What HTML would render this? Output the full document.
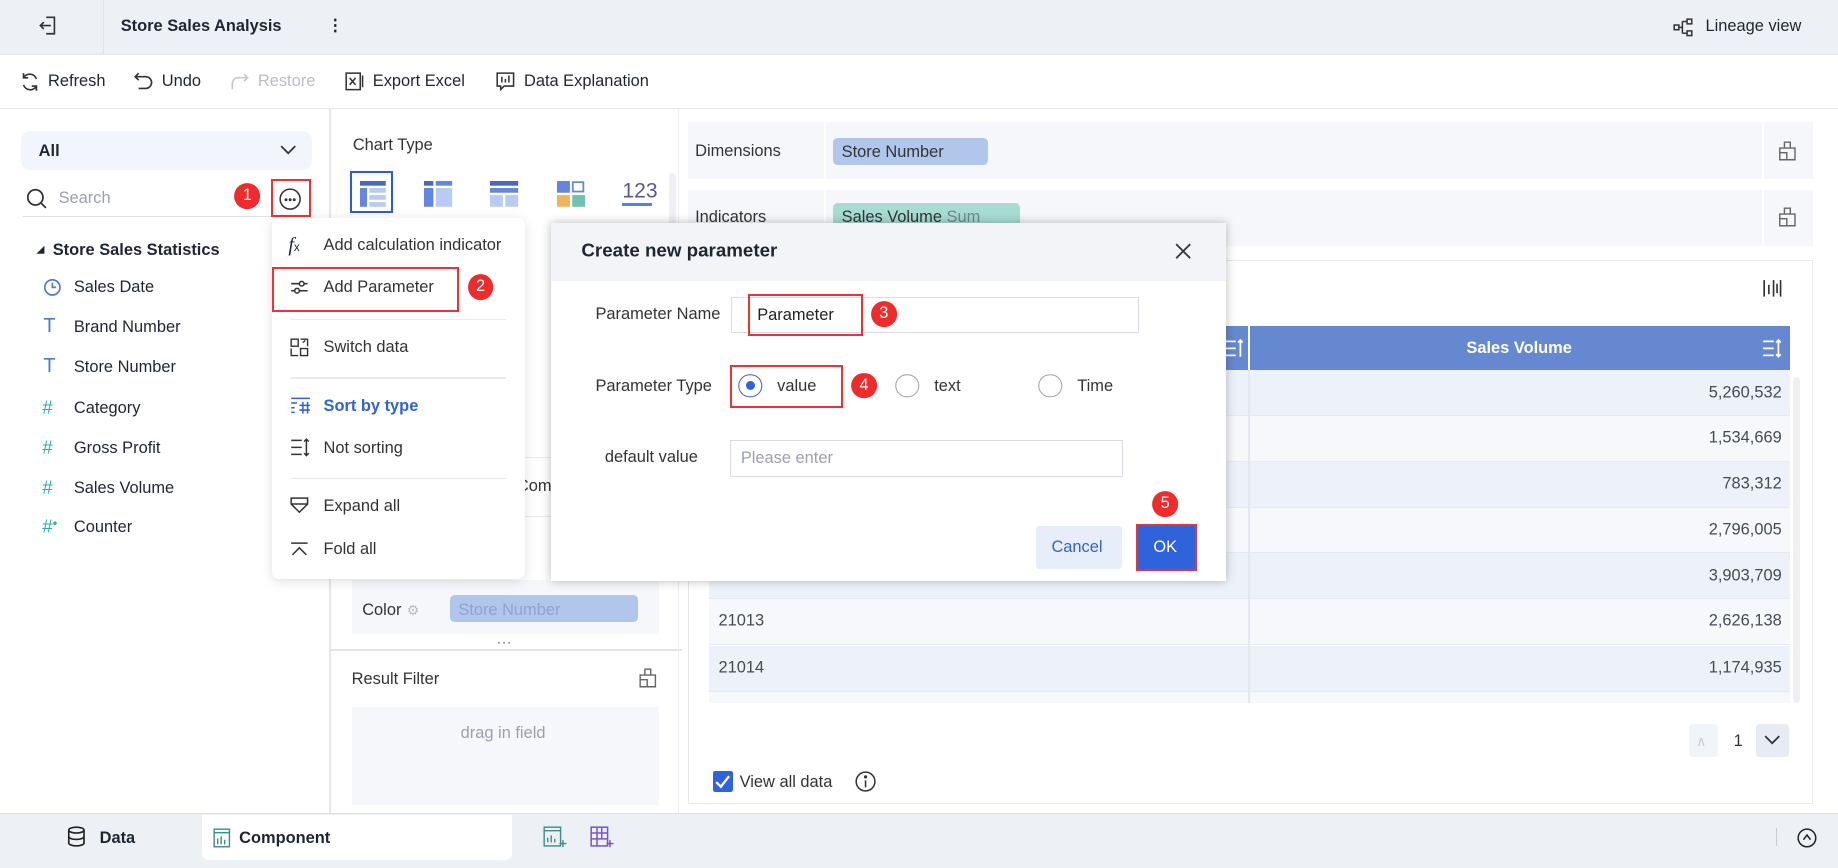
<!DOCTYPE html>
<html><head><meta charset="utf-8"><style>
html,body{margin:0;padding:0;}
body{width:1568px;height:740px;zoom:1.17219;position:relative;overflow:hidden;background:#fff;font-family:"Liberation Sans",Arial,sans-serif;font-size:14px;color:#1f2633;}
.a{position:absolute;}
.t{position:absolute;white-space:nowrap;line-height:1;transform:translateY(-50%);}
.badge{position:absolute;width:22px;height:22px;border-radius:50%;background:#ef2b2b;color:#fff;font-size:14px;text-align:center;line-height:22px;transform:translate(-50%,-50%);}
.red{position:absolute;border:2px solid #ec3333;box-sizing:border-box;}
svg{position:absolute;overflow:visible;}
.row{position:absolute;left:605px;width:922px;height:39px;border-bottom:1px solid #e4e9f2;box-sizing:border-box;}
.row span{position:absolute;top:50%;transform:translateY(-50%);color:#444b57;font-size:14px;}
.radio{position:absolute;width:20px;height:20px;border:1px solid #9aa0aa;border-radius:50%;box-sizing:border-box;transform:translate(-50%,-50%);}
</style></head><body>

<!-- top bar -->
<div class="a" style="left:0;top:0;width:1568px;height:46px;background:#edf0f5;border-bottom:1px solid #e2e6ec;"></div>
<div class="a" style="left:88px;top:0;width:1px;height:46px;background:#dfe3ea;"></div>
<svg style="left:32px;top:13px" width="18" height="18" viewBox="0 0 18 18" fill="none" stroke="#333" stroke-width="1.4"><path d="M7 2h7v14H7"/><path d="M11 9H2M5 6L2 9l3 3"/></svg>
<div class="t" style="left:103px;top:22px;font-weight:bold;font-size:14px;">Store Sales Analysis</div>
<div class="t" style="left:279px;top:22px;font-weight:bold;">⋮</div>
<svg style="left:1427px;top:15px" width="18" height="16" viewBox="0 0 18 16" fill="none" stroke="#333" stroke-width="1.3"><rect x="1" y="6" width="4" height="4"/><rect x="12" y="1" width="4" height="4"/><rect x="12" y="11" width="4" height="4"/><path d="M5 8h3M8 3v10M8 3h4M8 13h4"/></svg>
<div class="t" style="left:1455px;top:22px;">Lineage view</div>

<!-- toolbar -->
<div class="a" style="left:0;top:92px;width:1568px;height:1px;background:#e4e7ec;"></div>
<svg style="left:17px;top:61px" width="17" height="17" viewBox="0 0 17 17" fill="none" stroke="#333" stroke-width="1.4"><path d="M14 6A6 6 0 0 0 3 5M3 11a6 6 0 0 0 11 1"/><path d="M3 1v4h4M14 16v-4h-4"/></svg>
<div class="t" style="left:41px;top:69px;">Refresh</div>
<svg style="left:114px;top:61px" width="17" height="16" viewBox="0 0 17 16" fill="none" stroke="#333" stroke-width="1.4"><path d="M4 1L1 4l3 3"/><path d="M1 4h9a5 5 0 0 1 0 10H4"/></svg>
<div class="t" style="left:138px;top:69px;">Undo</div>
<svg style="left:196px;top:62px" width="17" height="15" viewBox="0 0 17 15" fill="none" stroke="#c4c8cf" stroke-width="1.4"><path d="M12 1l3 3-3 3"/><path d="M15 4H7a5 5 0 0 0-5 5v5"/></svg>
<div class="t" style="left:220px;top:69px;color:#b9bdc5;">Restore</div>
<svg style="left:294px;top:61px" width="16" height="16" viewBox="0 0 16 16" fill="none" stroke="#333" stroke-width="1.3"><path d="M1 1h12v14H1z"/><path d="M4 5l5 6M9 5l-5 6M15 3v10"/></svg>
<div class="t" style="left:318px;top:69px;">Export Excel</div>
<svg style="left:423px;top:61px" width="16" height="17" viewBox="0 0 16 17" fill="none" stroke="#333" stroke-width="1.3"><path d="M1 1h14v11H7l-3 3v-3H1z"/><path d="M5 4v5M8 6v3M11 3v6"/></svg>
<div class="t" style="left:447px;top:69px;">Data Explanation</div>

<!-- left panel -->
<div class="a" style="left:281px;top:93px;width:1px;height:601px;background:#e4e7ec;"></div>
<div class="a" style="left:18px;top:112px;width:248px;height:33px;background:#f2f6fc;border-radius:8px;"></div>
<div class="t" style="left:33px;top:129px;font-weight:bold;">All</div>
<svg style="left:239px;top:124px" width="14" height="9" viewBox="0 0 14 9" fill="none" stroke="#333" stroke-width="1.5"><path d="M1 1l6 6 6-6"/></svg>
<svg style="left:22px;top:160px" width="18" height="18" viewBox="0 0 18 18" fill="none" stroke="#333" stroke-width="1.5"><circle cx="8" cy="8" r="6.5"/><path d="M13 13l4 4"/></svg>
<div class="t" style="left:50px;top:169px;color:#9aa1ad;">Search</div>
<div class="a" style="left:20px;top:184px;width:245px;height:1px;background:#dde1e8;"></div>
<div class="badge" style="left:211px;top:167px;">1</div>
<div class="red" style="left:231px;top:153px;width:34px;height:32px;"></div>
<svg style="left:238px;top:160px" width="19" height="19" viewBox="0 0 19 19" fill="none" stroke="#333" stroke-width="1.3"><circle cx="9.5" cy="9.5" r="8.5"/><circle cx="6" cy="10" r=".6" fill="#333"/><circle cx="9.5" cy="10" r=".6" fill="#333"/><circle cx="13" cy="10" r=".6" fill="#333"/></svg>

<div class="t" style="left:31px;top:213px;font-size:9px;">◢</div>
<div class="t" style="left:45px;top:213px;font-weight:bold;">Store Sales Statistics</div>
<svg style="left:37px;top:237px" width="16" height="16" viewBox="0 0 16 16" fill="none" stroke="#4a78d6" stroke-width="1.4"><circle cx="8" cy="8" r="6.5"/><path d="M8 4v4h3"/></svg>
<div class="t" style="left:63px;top:245px;">Sales Date</div>
<div class="t" style="left:37px;top:279px;color:#4a78d6;font-size:17px;">T</div>
<div class="t" style="left:63px;top:279px;">Brand Number</div>
<div class="t" style="left:37px;top:313px;color:#4a78d6;font-size:17px;">T</div>
<div class="t" style="left:63px;top:313px;">Store Number</div>
<div class="t" style="left:36px;top:348px;color:#2fae9c;font-size:16px;">#</div>
<div class="t" style="left:63px;top:348px;">Category</div>
<div class="t" style="left:36px;top:382px;color:#2fae9c;font-size:16px;">#</div>
<div class="t" style="left:63px;top:382px;">Gross Profit</div>
<div class="t" style="left:36px;top:416px;color:#2fae9c;font-size:16px;">#</div>
<div class="t" style="left:63px;top:416px;">Sales Volume</div>
<div class="t" style="left:36px;top:450px;color:#2fae9c;font-size:16px;">#<sup style="font-size:7px">●</sup></div>
<div class="t" style="left:63px;top:450px;">Counter</div>

<!-- middle panel -->
<div class="t" style="left:301px;top:124px;color:#333;">Chart Type</div>
<div class="a" style="left:299px;top:146px;width:36px;height:36px;border:2px solid #2d5bd8;box-sizing:border-box;"></div>
<svg style="left:307px;top:154px" width="22" height="22" viewBox="0 0 22 22"><rect x="0" y="0" width="22" height="4" fill="#4a69b6"/><rect x="0" y="6" width="6" height="16" fill="#6387e0"/><rect x="8" y="6" width="14" height="4" fill="#b9cbf2"/><rect x="8" y="12" width="14" height="4" fill="#b9cbf2"/><rect x="8" y="18" width="14" height="4" fill="#b9cbf2"/></svg>
<svg style="left:362px;top:154px" width="24" height="22" viewBox="0 0 24 22"><rect x="0" y="0" width="8" height="4" fill="#4a69b6"/><rect x="0" y="6" width="8" height="16" fill="#6387e0"/><rect x="10" y="0" width="14" height="4" fill="#6387e0"/><rect x="10" y="6" width="14" height="16" fill="#b9cbf2"/></svg>
<svg style="left:418px;top:154px" width="24" height="22" viewBox="0 0 24 22"><rect x="0" y="0" width="24" height="4" fill="#4a69b6"/><rect x="0" y="6" width="24" height="4" fill="#6387e0"/><rect x="0" y="12" width="11" height="10" fill="#b9cbf2"/><rect x="13" y="12" width="11" height="10" fill="#b9cbf2"/></svg>
<svg style="left:475px;top:154px" width="24" height="22" viewBox="0 0 24 22"><rect x="0" y="0" width="11" height="10" fill="#6387e0"/><rect x="13.5" y="1" width="9" height="8" fill="none" stroke="#6387e0" stroke-width="1.5"/><rect x="0" y="12" width="11" height="10" fill="#f0b556"/><rect x="13" y="12" width="11" height="10" fill="#6fc2b2"/></svg>
<div class="t" style="left:531px;top:163px;font-size:18px;color:#555c8a;">123</div>
<div class="a" style="left:531px;top:173px;width:25px;height:3px;background:#5b7fe0;"></div>
<div class="a" style="left:571px;top:148px;width:6px;height:90px;background:#eef0f3;border-radius:3px;"></div>
<div class="a" style="left:282px;top:390px;width:296px;height:1px;background:#e8ebef;"></div>
<div class="t" style="left:441px;top:415px;color:#333;">Com</div>
<div class="a" style="left:282px;top:440px;width:296px;height:1px;background:#e8ebef;"></div>
<div class="a" style="left:300px;top:495px;width:262px;height:46px;background:#f5f7fb;"></div>
<div class="t" style="left:309px;top:520px;color:#333;">Color</div>
<div class="t" style="left:347px;top:520px;color:#bbb;font-size:12px;">⚙</div>
<div class="a" style="left:384px;top:508px;width:160px;height:23px;background:#b0c6ea;border-radius:4px;"></div>
<div class="t" style="left:391px;top:520px;color:#8fa4cc;">Store Number</div>
<div class="t" style="left:424px;top:551px;font-size:10px;letter-spacing:1px;line-height:0.6;">···<br>···</div>
<div class="a" style="left:282px;top:554px;width:300px;height:1px;background:#e1e4e9;"></div>
<div class="t" style="left:300px;top:579px;color:#333;">Result Filter</div>
<svg style="left:545px;top:570px" width="15" height="17" viewBox="0 0 15 17" fill="none" stroke="#666" stroke-width="1.2"><path d="M1 6h13v10H1zM5 6V1h5v5M1 10h6v6"/></svg>
<div class="a" style="left:300px;top:603px;width:262px;height:84px;background:#f5f7fb;"></div>
<div class="t" style="left:393px;top:625px;color:#9aa1ad;">drag in field</div>

<!-- right panel -->
<div class="a" style="left:578px;top:93px;width:1px;height:601px;background:#eceef2;"></div>
<div class="a" style="left:587px;top:104px;width:960px;height:49px;background:#f5f7fb;"></div>
<div class="a" style="left:703px;top:104px;width:2px;height:49px;background:#fff;"></div>
<div class="a" style="left:1503px;top:104px;width:2px;height:49px;background:#fff;"></div>
<div class="t" style="left:593px;top:129px;color:#333;">Dimensions</div>
<div class="a" style="left:711px;top:118px;width:132px;height:23px;background:#b0c6ea;border-radius:4px;"></div>
<div class="t" style="left:718px;top:130px;color:#333;">Store Number</div>
<svg style="left:1517px;top:120px" width="16" height="17" viewBox="0 0 15 17" fill="none" stroke="#666" stroke-width="1.2"><path d="M1 6h13v10H1zM5 6V1h5v5M1 10h6v6"/></svg>
<div class="a" style="left:587px;top:162px;width:960px;height:48px;background:#f5f7fb;"></div>
<div class="a" style="left:703px;top:162px;width:2px;height:48px;background:#fff;"></div>
<div class="a" style="left:1503px;top:162px;width:2px;height:48px;background:#fff;"></div>
<div class="t" style="left:593px;top:185px;color:#333;">Indicators</div>
<div class="a" style="left:711px;top:173px;width:159px;height:23px;background:#a7dcd2;border-radius:4px;"></div>
<div class="t" style="left:718px;top:185px;color:#333;">Sales Volume <span style="color:#6f8a86">Sum</span></div>
<svg style="left:1517px;top:177px" width="16" height="17" viewBox="0 0 15 17" fill="none" stroke="#666" stroke-width="1.2"><path d="M1 6h13v10H1zM5 6V1h5v5M1 10h6v6"/></svg>

<div class="a" style="left:587px;top:222px;width:960px;height:464px;border:1px solid #e5e8ee;box-sizing:border-box;"></div>
<svg style="left:1504px;top:238px" width="16" height="16" viewBox="0 0 16 16" fill="none" stroke="#333" stroke-width="1.4"><path d="M1 1v14M5 5v8M9 1v14M12 4v8M15 1v14"/></svg>
<div class="a" style="left:605px;top:278px;width:922px;height:38px;background:#6688d0;"></div>
<div class="a" style="left:1065px;top:278px;width:1px;height:38px;background:#fff;"></div>
<div class="t" style="left:1251px;top:297px;color:#fff;font-weight:bold;">Sales Volume</div>
<svg style="left:1503px;top:289px" width="17" height="16" viewBox="0 0 17 16" fill="none" stroke="#fff" stroke-width="1.5"><path d="M1 2h9M1 8h9M1 14h9M14 1v14M12 3l2-2 2 2M12 13l2 2 2-2"/></svg>
<svg style="left:1044px;top:289px" width="17" height="16" viewBox="0 0 17 16" fill="none" stroke="#fff" stroke-width="1.5"><path d="M1 2h9M1 8h9M1 14h9M14 1v14M12 3l2-2 2 2"/></svg>

<div class="row" style="top:316px;background:#edf2fa;"><span style="right:7px">5,260,532</span></div>
<div class="row" style="top:355px;background:#f6f8fc;"><span style="right:7px">1,534,669</span></div>
<div class="row" style="top:394px;background:#edf2fa;"><span style="right:7px">783,312</span></div>
<div class="row" style="top:433px;background:#f6f8fc;"><span style="right:7px">2,796,005</span></div>
<div class="row" style="top:472px;background:#edf2fa;"><span style="left:8px">12011</span><span style="right:7px">3,903,709</span></div>
<div class="row" style="top:511px;background:#f6f8fc;"><span style="left:8px">21013</span><span style="right:7px">2,626,138</span></div>
<div class="row" style="top:551px;background:#edf2fa;"><span style="left:8px">21014</span><span style="right:7px">1,174,935</span></div>
<div class="a" style="left:605px;top:590px;width:922px;height:10px;background:#f6f8fc;"></div>
<div class="a" style="left:1065px;top:316px;width:1px;height:284px;background:#e2e7f0;"></div>
<div class="a" style="left:1530px;top:322px;width:6px;height:278px;background:#eef0f3;border-radius:3px;"></div>

<div class="a" style="left:1441px;top:618px;width:25px;height:28px;background:#f1f4f9;border-radius:3px;"></div>
<div class="t" style="left:1447px;top:632px;color:#ccc;font-size:12px;">∧</div>
<div class="t" style="left:1479px;top:632px;color:#333;">1</div>
<div class="a" style="left:1498px;top:618px;width:28px;height:28px;background:#e6ebf4;border-radius:3px;"></div>
<svg style="left:1505px;top:627px" width="14" height="9" viewBox="0 0 14 9" fill="none" stroke="#333" stroke-width="1.5"><path d="M1 1l6 6 6-6"/></svg>

<div class="a" style="left:608px;top:658px;width:17px;height:18px;background:#2f63d9;border-radius:2px;"></div>
<svg style="left:610px;top:661px" width="13" height="12" viewBox="0 0 13 12" fill="none" stroke="#fff" stroke-width="2"><path d="M1 6l4 4 7-9"/></svg>
<div class="t" style="left:631px;top:667px;color:#333;">View all data</div>
<svg style="left:729px;top:658px" width="18" height="18" viewBox="0 0 18 18" fill="none" stroke="#333" stroke-width="1.3"><circle cx="9" cy="9" r="8"/><path d="M9 8v6"/><circle cx="9" cy="5" r=".7" fill="#333"/></svg>

<!-- bottom bar -->
<div class="a" style="left:0;top:694px;width:1568px;height:46px;background:#edf0f5;border-top:1px solid #dde1e7;"></div>
<svg style="left:57px;top:705px" width="16" height="18" viewBox="0 0 16 18" fill="none" stroke="#222" stroke-width="1.4"><ellipse cx="8" cy="3.5" rx="6.5" ry="2.5"/><path d="M1.5 3.5v11c0 1.4 3 2.5 6.5 2.5s6.5-1.1 6.5-2.5v-11M1.5 9c0 1.4 3 2.5 6.5 2.5s6.5-1.1 6.5-2.5"/></svg>
<div class="t" style="left:85px;top:715px;font-weight:bold;">Data</div>
<div class="a" style="left:172px;top:695px;width:265px;height:39px;background:#fff;border-radius:0 0 6px 6px;"></div>
<svg style="left:182px;top:706px" width="15" height="17" viewBox="0 0 15 17" fill="none" stroke="#3a8f86" stroke-width="1.2"><rect x="1" y="1" width="13" height="15"/><path d="M1 4h13M4 14V9M7 14V7M10 14v-4"/></svg>
<div class="t" style="left:204px;top:715px;font-weight:bold;">Component</div>
<svg style="left:463px;top:705px" width="20" height="20" viewBox="0 0 20 20" fill="none" stroke="#3a8f86" stroke-width="1.2"><rect x="1" y="1" width="14" height="16"/><path d="M1 4h14M4 14V10M7 14V8M10 14v-3M14 15h6M17 12v6"/></svg>
<svg style="left:503px;top:705px" width="20" height="20" viewBox="0 0 20 20" fill="none" stroke="#7a55c8" stroke-width="1.3"><rect x="1" y="1" width="14" height="16"/><path d="M1 6h14M1 11h14M6 1v16M10 1v10M14 15h6M17 12v6"/></svg>
<div class="a" style="left:1515px;top:706px;width:1px;height:16px;background:#c8ccd3;"></div>
<svg style="left:1533px;top:706px" width="17" height="17" viewBox="0 0 17 17" fill="none" stroke="#222" stroke-width="1.3"><circle cx="8.5" cy="8.5" r="7.5"/><path d="M5.5 10l3-4 3 4"/></svg>

<!-- context menu -->
<div class="a" style="left:232px;top:186px;width:216px;height:308px;background:#fff;border-radius:6px;box-shadow:0 2px 10px rgba(0,0,0,0.13);"></div>
<div class="t" style="left:246px;top:210px;font-family:'Liberation Serif',serif;font-style:italic;font-size:17px;">f<span style="font-size:10px;font-style:normal;font-family:'Liberation Sans'">x</span></div>
<div class="t" style="left:276px;top:209px;color:#333;">Add calculation indicator</div>
<svg style="left:247px;top:238px" width="16" height="14" viewBox="0 0 16 14" fill="none" stroke="#333" stroke-width="1.3"><path d="M1 4h14M1 10h14"/><circle cx="10" cy="4" r="2" fill="#fff"/><circle cx="6" cy="10" r="2" fill="#fff"/></svg>
<div class="t" style="left:276px;top:245px;color:#333;">Add Parameter</div>
<div class="red" style="left:232px;top:228px;width:160px;height:38px;"></div>
<div class="badge" style="left:410px;top:245px;">2</div>
<div class="a" style="left:248px;top:272px;width:184px;height:1px;background:#e8ebef;"></div>
<svg style="left:247px;top:288px" width="16" height="16" viewBox="0 0 16 16" fill="none" stroke="#333" stroke-width="1.2"><rect x="1" y="1" width="6" height="6"/><rect x="9" y="9" width="6" height="6"/><path d="M1 9v6h6M9 1h6v6M11 4l2-2"/></svg>
<div class="t" style="left:276px;top:296px;color:#333;">Switch data</div>
<div class="a" style="left:248px;top:322px;width:184px;height:1px;background:#e8ebef;"></div>
<svg style="left:247px;top:338px" width="17" height="16" viewBox="0 0 17 16" fill="none" stroke="#2f63d9" stroke-width="1.3"><path d="M1 2h16M1 6h5M1 10h3M1 14h3M8 8h9M8 12h9M11 5v10M15 5v10"/></svg>
<div class="t" style="left:276px;top:346px;color:#2f63d9;font-weight:bold;">Sort by type</div>
<svg style="left:247px;top:374px" width="17" height="16" viewBox="0 0 17 16" fill="none" stroke="#333" stroke-width="1.3"><path d="M1 2h9M1 8h9M1 14h9M14 1v14M12 3l2-2 2 2M12 13l2 2 2-2"/></svg>
<div class="t" style="left:276px;top:382px;color:#333;">Not sorting</div>
<div class="a" style="left:248px;top:408px;width:184px;height:1px;background:#e8ebef;"></div>
<svg style="left:247px;top:424px" width="16" height="16" viewBox="0 0 16 16" fill="none" stroke="#333" stroke-width="1.3"><path d="M1 1h14v5L8 13 1 6zM1 6h14"/></svg>
<div class="t" style="left:276px;top:432px;color:#333;">Expand all</div>
<svg style="left:247px;top:462px" width="16" height="12" viewBox="0 0 16 12" fill="none" stroke="#333" stroke-width="1.3"><path d="M1 1h14M2 11l6-6 6 6"/></svg>
<div class="t" style="left:276px;top:468px;color:#333;">Fold all</div>

<!-- dialog -->
<div class="a" style="left:470px;top:190px;width:576px;height:306px;background:#fff;box-shadow:0 0 8px rgba(0,0,0,0.28);"></div>
<div class="a" style="left:470px;top:190px;width:576px;height:50px;background:#f2f4f8;"></div>
<div class="t" style="left:496px;top:214px;font-weight:bold;font-size:16px;color:#1f2633;">Create new parameter</div>
<svg style="left:1002px;top:207px" width="14" height="14" viewBox="0 0 14 14" fill="none" stroke="#333" stroke-width="1.5"><path d="M1 1l12 12M13 1L1 13"/></svg>
<div class="t" style="left:508px;top:268px;color:#333;">Parameter Name</div>
<div class="a" style="left:624px;top:253px;width:348px;height:31px;border:1px solid #d8dce3;box-sizing:border-box;"></div>
<div class="t" style="left:646px;top:269px;color:#222;">Parameter</div>
<div class="red" style="left:638px;top:251px;width:98px;height:36px;"></div>
<div class="badge" style="left:754px;top:268px;">3</div>
<div class="t" style="left:508px;top:329px;color:#333;">Parameter Type</div>
<div class="radio" style="left:640px;top:329px;border-color:#2f63d9;"></div>
<div class="a" style="left:636px;top:325px;width:8px;height:8px;background:#2f63d9;border-radius:50%;"></div>
<div class="t" style="left:663px;top:329px;color:#333;">value</div>
<div class="red" style="left:623px;top:311px;width:96px;height:37px;"></div>
<div class="badge" style="left:737px;top:329px;">4</div>
<div class="radio" style="left:774px;top:329px;"></div>
<div class="t" style="left:797px;top:329px;color:#333;">text</div>
<div class="radio" style="left:896px;top:329px;"></div>
<div class="t" style="left:919px;top:329px;color:#333;">Time</div>
<div class="t" style="left:516px;top:390px;color:#333;">default value</div>
<div class="a" style="left:623px;top:375px;width:335px;height:32px;border:1px solid #d8dce3;box-sizing:border-box;"></div>
<div class="t" style="left:632px;top:391px;color:#9aa1ad;">Please enter</div>
<div class="badge" style="left:994px;top:430px;">5</div>
<div class="a" style="left:884px;top:449px;width:73px;height:36px;background:#e8eef9;border-radius:3px;"></div>
<div class="t" style="left:897px;top:467px;color:#2f63d9;">Cancel</div>
<div class="a" style="left:969px;top:447px;width:52px;height:40px;background:#2f63d9;border:2px solid #ec3333;box-sizing:border-box;"></div>
<div class="t" style="left:984px;top:467px;color:#fff;">OK</div>

</body></html>
